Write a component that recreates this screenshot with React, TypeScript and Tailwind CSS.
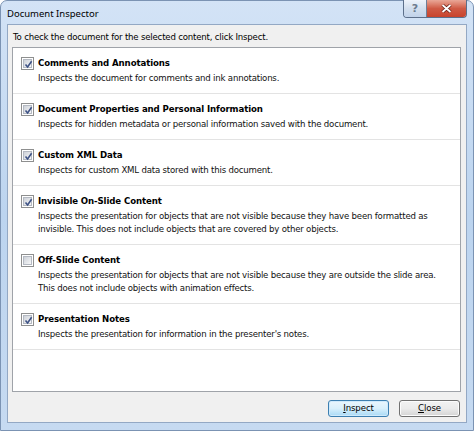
import React from 'react';

const items = [
  {
    title: 'Comments and Annotations',
    lines: ['Inspects the document for comments and ink annotations.'],
    checked: true,
  },
  {
    title: 'Document Properties and Personal Information',
    lines: ['Inspects for hidden metadata or personal information saved with the document.'],
    checked: true,
  },
  {
    title: 'Custom XML Data',
    lines: ['Inspects for custom XML data stored with this document.'],
    checked: true,
  },
  {
    title: 'Invisible On-Slide Content',
    lines: [
      'Inspects the presentation for objects that are not visible because they have been formatted as',
      'invisible. This does not include objects that are covered by other objects.',
    ],
    checked: true,
  },
  {
    title: 'Off-Slide Content',
    lines: [
      'Inspects the presentation for objects that are not visible because they are outside the slide area.',
      'This does not include objects with animation effects.',
    ],
    checked: false,
  },
  {
    title: 'Presentation Notes',
    lines: ["Inspects the presentation for information in the presenter's notes."],
    checked: true,
  },
];

function CheckBox({ checked }: { checked: boolean }) {
  return (
    <div className="w-[13px] h-[13px] border border-[#8e8f8f] bg-white p-[1px] shrink-0">
      <div className="relative w-full h-full border border-[#b4b9c2] bg-gradient-to-br from-[#cdd1d8] to-[#f7f8f9]">
        {checked && (
          <svg className="absolute left-[0px] top-[0px]" width="9" height="9" viewBox="0 0 9 9">
            <path d="M1.5 4.5 L3.6 7 L7.6 1.2" fill="none" stroke="#3d5285" strokeWidth="1.6" />
          </svg>
        )}
      </div>
    </div>
  );
}

export default function App() {
  const body = { fontFamily: '"DejaVu Sans", Tahoma, sans-serif' };

  return (
    <div className="w-[474px] h-[431px] flex flex-col rounded-t-[7px] border border-[#7b93b3] bg-gradient-to-b from-[#d3e3f6] via-[#bcd4ef] to-[#c6daf1] px-[6px] pb-[7px]">
      {/* Title bar */}
      <div className="h-[23px] flex items-start shrink-0">
        <div
          className="pt-[6px] text-[9.5px] leading-[13px] text-black"
          style={{ fontFamily: '"Noto Sans", "Open Sans", sans-serif' }}
        >
          Document Inspector
        </div>
        <div className="flex-1" />
        <div className="flex -mt-[1px] rounded-b-[4px] border border-t-0 border-[#5c6f8a] overflow-hidden">
          <div className="w-[23px] h-[17px] flex items-center justify-center border-r border-[#6e7f98] bg-gradient-to-b from-[#eef3fa] via-[#d3dfee] to-[#c1d3ea]">
            <span className="text-[11px] leading-none font-bold text-[#6c7b8f]" style={body}>?</span>
          </div>
          <div className="w-[39px] h-[17px] flex items-center justify-center bg-gradient-to-b from-[#e9a797] via-[#cf5a45] to-[#c8432c]">
            <svg width="11" height="9" viewBox="0 0 11 9">
              <path d="M1.5 1 L9.5 8 M9.5 1 L1.5 8" stroke="#6b2218" strokeWidth="3.4" />
              <path d="M1.5 1 L9.5 8 M9.5 1 L1.5 8" stroke="#ffffff" strokeWidth="1.8" />
            </svg>
          </div>
        </div>
      </div>

      {/* Client area */}
      <div className="flex-1 flex flex-col border border-[#93a8c4] bg-[#f0f0f0]" style={body}>
        <div className="h-[22px] pt-[6px] pl-[5px] text-[8.6px] tracking-[-0.2px] leading-[12px] text-black whitespace-nowrap">
          To check the document for the selected content, click Inspect.
        </div>

        <div className="h-[345px] ml-[4px] mr-[5px] border border-[#9fa3a9] bg-white">
          {items.map((item, i) => (
            <div key={i} className="flex pl-[8px] pt-[9px] pb-[8px] border-b border-[#e3e3e3]">
              <div className="h-[13px] flex items-center">
                <CheckBox checked={item.checked} />
              </div>
              <div className="pl-[4px]">
                <div className="text-[8.6px] tracking-[-0.1px] leading-[13px] font-bold text-black whitespace-nowrap">
                  {item.title}
                </div>
                <div className="mt-[2px] text-[8.6px] tracking-[-0.2px] leading-[13px] text-[#111] whitespace-nowrap">
                  {item.lines.map((l, j) => (
                    <div key={j}>{l}</div>
                  ))}
                </div>
              </div>
            </div>
          ))}
        </div>

        <div className="flex justify-end gap-[10px] pt-[8px] pr-[6px]">
          <button className="w-[61px] h-[17px] rounded-[3px] border border-[#3c7fb1] bg-gradient-to-b from-[#eaf6fd] via-[#d9f0fc] to-[#a7d9f5] text-[8.6px] tracking-[-0.1px] leading-none text-black shadow-[inset_0_0_0_1px_#cfeafc]">
            <span className="underline">I</span>nspect
          </button>
          <button className="w-[61px] h-[17px] rounded-[3px] border border-[#707070] bg-gradient-to-b from-[#f2f2f2] via-[#ebebeb] to-[#d4d4d4] text-[8.6px] tracking-[-0.1px] leading-none text-black shadow-[inset_0_0_0_1px_#fcfcfc]">
            <span className="underline">C</span>lose
          </button>
        </div>
      </div>
    </div>
  );
}
